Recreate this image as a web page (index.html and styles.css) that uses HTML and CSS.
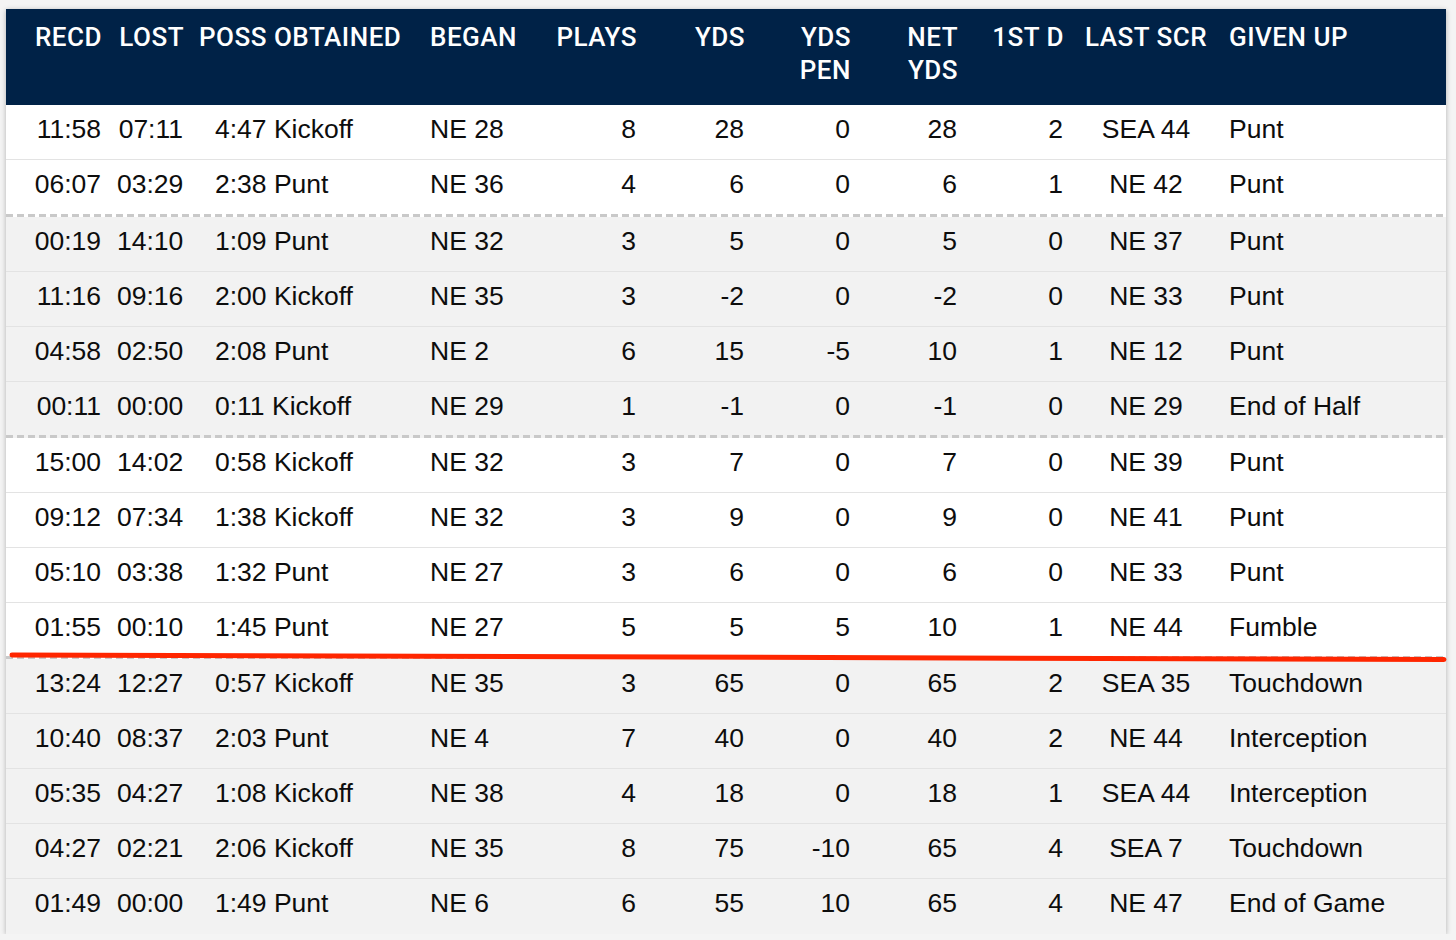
FILE: index.html
```html
<!DOCTYPE html>
<html lang="en">
<head>
<meta charset="utf-8">
<title>Drive Summary</title>
<link rel="stylesheet" href="styles.css">
</head>
<body>
<div class="wrap">
  <table class="drives">
    <colgroup>
      <col class="c-recd"><col class="c-lost"><col class="c-poss"><col class="c-began"><col class="c-plays"><col class="c-yds"><col class="c-pen"><col class="c-net"><col class="c-first"><col class="c-last"><col class="c-given">
    </colgroup>
    <thead>
      <tr>
        <th class="r">RECD</th>
        <th class="r">LOST</th>
        <th class="l">POSS OBTAINED</th>
        <th class="l">BEGAN</th>
        <th class="r">PLAYS</th>
        <th class="r">YDS</th>
        <th class="r">YDS<br>PEN</th>
        <th class="r">NET<br>YDS</th>
        <th class="r">1ST D</th>
        <th class="c">LAST SCR</th>
        <th class="l">GIVEN UP</th>
      </tr>
    </thead>
    <tbody>
      <tr class="w"><td class="r">11:58</td><td class="r">07:11</td><td class="poss">4:47 Kickoff</td><td class="l">NE 28</td><td class="r">8</td><td class="r">28</td><td class="r">0</td><td class="r">28</td><td class="r">2</td><td class="c">SEA 44</td><td class="l">Punt</td></tr>
      <tr class="w end first-end"><td class="r">06:07</td><td class="r">03:29</td><td class="poss">2:38 Punt</td><td class="l">NE 36</td><td class="r">4</td><td class="r">6</td><td class="r">0</td><td class="r">6</td><td class="r">1</td><td class="c">NE 42</td><td class="l">Punt</td></tr>

      <tr class="g"><td class="r">00:19</td><td class="r">14:10</td><td class="poss">1:09 Punt</td><td class="l">NE 32</td><td class="r">3</td><td class="r">5</td><td class="r">0</td><td class="r">5</td><td class="r">0</td><td class="c">NE 37</td><td class="l">Punt</td></tr>
      <tr class="g"><td class="r">11:16</td><td class="r">09:16</td><td class="poss">2:00 Kickoff</td><td class="l">NE 35</td><td class="r">3</td><td class="r">-2</td><td class="r">0</td><td class="r">-2</td><td class="r">0</td><td class="c">NE 33</td><td class="l">Punt</td></tr>
      <tr class="g"><td class="r">04:58</td><td class="r">02:50</td><td class="poss">2:08 Punt</td><td class="l">NE 2</td><td class="r">6</td><td class="r">15</td><td class="r">-5</td><td class="r">10</td><td class="r">1</td><td class="c">NE 12</td><td class="l">Punt</td></tr>
      <tr class="g end"><td class="r">00:11</td><td class="r">00:00</td><td class="poss">0:11 Kickoff</td><td class="l">NE 29</td><td class="r">1</td><td class="r">-1</td><td class="r">0</td><td class="r">-1</td><td class="r">0</td><td class="c">NE 29</td><td class="l">End of Half</td></tr>

      <tr class="w"><td class="r">15:00</td><td class="r">14:02</td><td class="poss">0:58 Kickoff</td><td class="l">NE 32</td><td class="r">3</td><td class="r">7</td><td class="r">0</td><td class="r">7</td><td class="r">0</td><td class="c">NE 39</td><td class="l">Punt</td></tr>
      <tr class="w"><td class="r">09:12</td><td class="r">07:34</td><td class="poss">1:38 Kickoff</td><td class="l">NE 32</td><td class="r">3</td><td class="r">9</td><td class="r">0</td><td class="r">9</td><td class="r">0</td><td class="c">NE 41</td><td class="l">Punt</td></tr>
      <tr class="w"><td class="r">05:10</td><td class="r">03:38</td><td class="poss">1:32 Punt</td><td class="l">NE 27</td><td class="r">3</td><td class="r">6</td><td class="r">0</td><td class="r">6</td><td class="r">0</td><td class="c">NE 33</td><td class="l">Punt</td></tr>
      <tr class="w end"><td class="r">01:55</td><td class="r">00:10</td><td class="poss">1:45 Punt</td><td class="l">NE 27</td><td class="r">5</td><td class="r">5</td><td class="r">5</td><td class="r">10</td><td class="r">1</td><td class="c">NE 44</td><td class="l">Fumble</td></tr>

      <tr class="g"><td class="r">13:24</td><td class="r">12:27</td><td class="poss">0:57 Kickoff</td><td class="l">NE 35</td><td class="r">3</td><td class="r">65</td><td class="r">0</td><td class="r">65</td><td class="r">2</td><td class="c">SEA 35</td><td class="l">Touchdown</td></tr>
      <tr class="g"><td class="r">10:40</td><td class="r">08:37</td><td class="poss">2:03 Punt</td><td class="l">NE 4</td><td class="r">7</td><td class="r">40</td><td class="r">0</td><td class="r">40</td><td class="r">2</td><td class="c">NE 44</td><td class="l">Interception</td></tr>
      <tr class="g"><td class="r">05:35</td><td class="r">04:27</td><td class="poss">1:08 Kickoff</td><td class="l">NE 38</td><td class="r">4</td><td class="r">18</td><td class="r">0</td><td class="r">18</td><td class="r">1</td><td class="c">SEA 44</td><td class="l">Interception</td></tr>
      <tr class="g"><td class="r">04:27</td><td class="r">02:21</td><td class="poss">2:06 Kickoff</td><td class="l">NE 35</td><td class="r">8</td><td class="r">75</td><td class="r">-10</td><td class="r">65</td><td class="r">4</td><td class="c">SEA 7</td><td class="l">Touchdown</td></tr>
      <tr class="g last"><td class="r">01:49</td><td class="r">00:00</td><td class="poss">1:49 Punt</td><td class="l">NE 6</td><td class="r">6</td><td class="r">55</td><td class="r">10</td><td class="r">65</td><td class="r">4</td><td class="c">NE 47</td><td class="l">End of Game</td></tr>
    </tbody>
  </table>
  <svg class="mark" width="1456" height="20" viewBox="0 0 1456 20" aria-hidden="true">
    <path d="M12 6 Q 700 8.5 1444 10.5" fill="none" stroke="#ff2600" stroke-width="5" stroke-linecap="round"/>
  </svg>
</div>
</body>
</html>
```
FILE: styles.css
```css
html, body {
  margin: 0;
  background: #f4f4f4;
}
body {
  padding: 9px 10px 0 6px;
}
.wrap {
  position: relative;
  width: 1440px;
}
.drives {
  width: 1440px;
  table-layout: fixed;
  border-collapse: separate;
  border-spacing: 0;
  background: #fff;
  box-shadow: 0 1px 5px rgba(0, 0, 0, 0.28);
  font-family: "Liberation Sans", Arial, sans-serif;
  font-size: 26.5px;
  color: #0d0d0d;
}
.c-recd { width: 103px; }
.c-lost { width: 82px; }
.c-poss { width: 231px; }
.c-began { width: 118px; }
.c-plays { width: 104px; }
.c-yds { width: 108px; }
.c-pen { width: 106px; }
.c-net { width: 107px; }
.c-first { width: 106px; }
.c-last { width: 150px; }
.c-given { width: 225px; }

.drives th {
  background: #002247;
  color: #fff;
  font-family: Roboto, "Noto Sans", sans-serif;
  font-weight: 500;
  font-size: 26px;
  letter-spacing: 0.5px;
  line-height: 33px;
  height: 96px;
  box-sizing: border-box;
  padding: 12px 8px 18px;
  vertical-align: top;
  white-space: nowrap;
}
.drives th.r { padding-right: 7px; }
.drives td {
  height: 55px;
  box-sizing: border-box;
  padding: 9px 8px 14px;
  line-height: 30px;
  vertical-align: top;
  white-space: nowrap;
  border-bottom: 1px solid #e3e3e3;
}
.r { text-align: right; }
.l { text-align: left; }
.c { text-align: center; }
td.poss { text-align: left; padding-left: 24px; }

tr.w { background: #fff; }
tr.g { background: #f2f2f2; }

tr.end td {
  border-bottom: none;
  height: 56px;
  padding-bottom: 17px;
}
tr.first-end td {
  height: 57px;
  padding-bottom: 18px;
}
tr.end {
  background-image: repeating-linear-gradient(to right, #c9c9c9 0 7px, transparent 7px 11px);
  background-size: 100% 3px;
  background-position: left bottom;
  background-repeat: no-repeat;
}
tr.last td { border-bottom: none; }

.mark {
  position: absolute;
  left: -6px;
  top: 640px;
  pointer-events: none;
}
```
